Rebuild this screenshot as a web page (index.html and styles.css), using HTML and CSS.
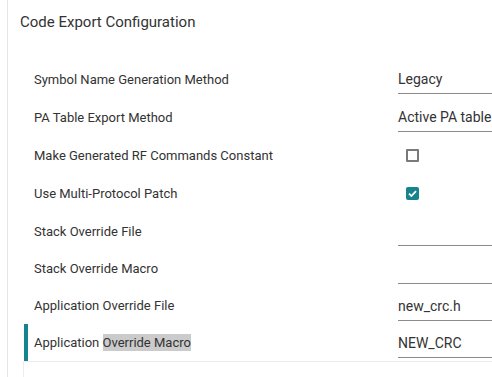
FILE: index.html
```html
<!DOCTYPE html>
<html>

<head>
	<meta charset="utf-8" />
	<title>Code Export Configuration</title>
	<link rel="stylesheet" href="styles.css">
</head>

<body>
	<div id="panel">
		<div id="title">Code Export Configuration</div>
		<div id="settings">
			<div class="row tall">
				<div class="label">Symbol Name Generation Method</div>
				<div class="value"><div class="field">Legacy</div></div>
			</div>
			<div class="row tall">
				<div class="label">PA Table Export Method</div>
				<div class="value"><div class="field">Active PA table</div></div>
			</div>
			<div class="row tall">
				<div class="label">Make Generated RF Commands Constant</div>
				<div class="value"><span class="checkbox"></span></div>
			</div>
			<div class="row tall">
				<div class="label">Use Multi-Protocol Patch</div>
				<div class="value">
					<span class="checkbox checked">
						<svg width="13" height="13" viewBox="0 0 13 13">
							<path d="M3 6.6 L5.4 9 L10 4.2" fill="none" stroke="#fff" stroke-width="1.8" />
						</svg>
					</span>
				</div>
			</div>
			<div class="row tall">
				<div class="label">Stack Override File</div>
				<div class="value"><div class="field"></div></div>
			</div>
			<div class="row">
				<div class="label">Stack Override Macro</div>
				<div class="value"><div class="field"></div></div>
			</div>
			<div class="row">
				<div class="label">Application Override File</div>
				<div class="value"><div class="field">new_crc.h</div></div>
			</div>
			<div class="row active">
				<div class="label">Application <span class="selected">Override Macro</span></div>
				<div class="value"><div class="field">NEW_CRC</div></div>
			</div>
			<div class="row-after"></div>
		</div>
	</div>
</body>

</html>
```

FILE: styles.css
```css
html,
body {
	margin: 0;
	height: 100%;
	background: #fff;
	overflow: hidden;
}

body {
	font-family: Roboto, "Liberation Sans", Arial, sans-serif;
	color: #333;
}

#panel {
	margin-left: 7px;
	height: 100%;
	border-left: 1px solid #e6e6e6;
}

#title {
	padding: 12px 0 0 12px;
	height: 60px;
	box-sizing: border-box;
	font-size: 15px;
	line-height: 20px;
	color: #333;
}

#settings {
	margin-left: 16px;
}

.row {
	display: flex;
	align-items: center;
	height: 37px;
	border-left: 4px solid transparent;
}

.row.tall {
	height: 38px;
}

.row.active {
	border-left-color: #17838c;
}

.label {
	width: 370px;
	padding-left: 6px;
	box-sizing: border-box;
	font-size: 13px;
	color: #333;
	white-space: nowrap;
}

.selected {
	background: #cbcbcb;
	padding: 1px 0;
}

.value {
	flex: 1;
	display: flex;
	align-items: center;
	height: 100%;
}

.field {
	width: 100%;
	height: 28px;
	margin-top: 2px;
	box-sizing: border-box;
	border-bottom: 1px solid #8c8c8c;
	font-size: 14px;
	line-height: 26px;
	color: #333;
	white-space: nowrap;
}

.checkbox {
	display: inline-block;
	box-sizing: border-box;
	width: 13px;
	height: 13px;
	margin-left: 8px;
	margin-top: 1px;
	border: 2px solid #7a7a7a;
	border-radius: 1px;
}

.checkbox.checked {
	border: 0;
	background: #17838c;
	border-radius: 2px;
}

.checkbox svg {
	display: block;
}

.row-after {
	height: 20px;
	border-top: 1px solid #ededed;
	border-left: 1px solid #ededed;
	margin-left: -1px;
}
```
